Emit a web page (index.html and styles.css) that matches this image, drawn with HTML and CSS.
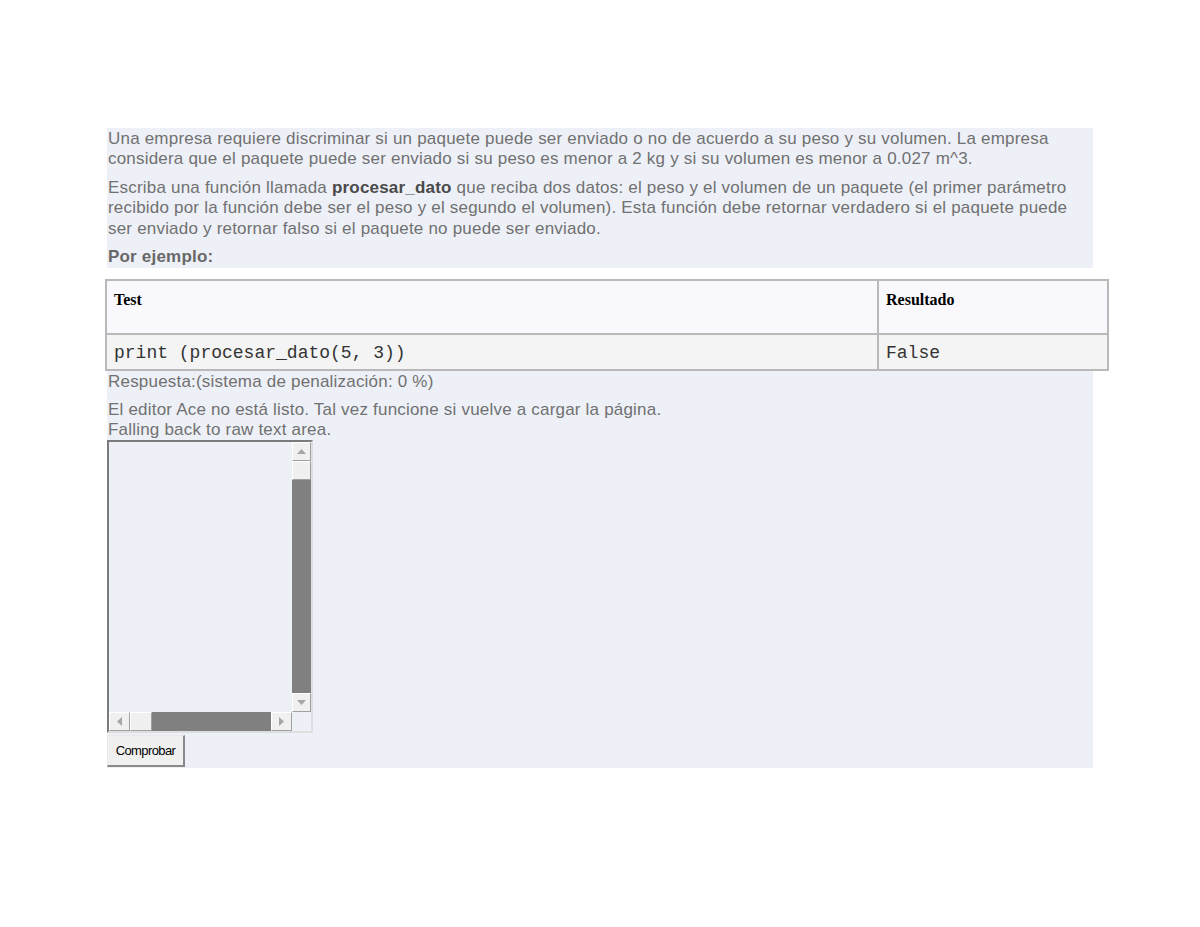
FILE: index.html
```html
<!DOCTYPE html>
<html lang="es">
<head>
<meta charset="utf-8">
<title>Pregunta</title>
<link rel="stylesheet" href="styles.css">
</head>
<body>
<div class="page">
  <div class="qtext">
    <p>Una empresa requiere discriminar si un paquete puede ser enviado o no de acuerdo a su peso y su volumen. La empresa considera que el paquete puede ser enviado si su peso es menor a 2 kg y si su volumen es menor a 0.027 m^3.</p>
    <p>Escriba una función llamada <b class="strong">procesar_dato</b> que reciba dos datos: el peso y el volumen de un paquete (el primer parámetro recibido por la función debe ser el peso y el segundo el volumen). Esta función debe retornar verdadero si el paquete puede ser enviado y retornar falso si el paquete no puede ser enviado.</p>
    <p class="ex">Por ejemplo:</p>
  </div>
  <table class="examples">
    <thead>
      <tr><th class="c1">Test</th><th class="c2">Resultado</th></tr>
    </thead>
    <tbody>
      <tr><td class="c1">print (procesar_dato(5, 3))</td><td class="c2">False</td></tr>
    </tbody>
  </table>
  <div class="answer">
    <div class="line">Respuesta:(sistema de penalización: 0 %)</div>
    <div class="notice">El editor Ace no está listo. Tal vez funcione si vuelve a cargar la página.<br>Falling back to raw text area.</div>
    <div class="ta">
      <div class="ta-body"></div>
      <div class="vbar">
        <div class="sbtn"><svg width="9" height="5" viewBox="0 0 9 5"><path d="M0 5 L4.5 0 L9 5 Z" fill="#a6a6a6"/></svg></div>
        <div class="vthumb"></div>
        <div class="vtrack"></div>
        <div class="sbtn"><svg width="9" height="5" viewBox="0 0 9 5"><path d="M0 0 L4.5 5 L9 0 Z" fill="#a6a6a6"/></svg></div>
      </div>
      <div class="hbar">
        <div class="sbtn hb"><svg width="5" height="9" viewBox="0 0 5 9"><path d="M5 0 L0 4.5 L5 9 Z" fill="#a6a6a6"/></svg></div>
        <div class="hthumb"></div>
        <div class="htrack"></div>
        <div class="sbtn hb"><svg width="5" height="9" viewBox="0 0 5 9"><path d="M0 0 L5 4.5 L0 9 Z" fill="#a6a6a6"/></svg></div>
      </div>
      <div class="corner"></div>
    </div>
    <div class="actions"><button class="check" type="button">Comprobar</button></div>
  </div>
</div>
</body>
</html>
```
FILE: styles.css
```css
html, body {
  margin: 0;
  padding: 0;
  background: #ffffff;
}
.page {
  margin: 128px 0 0 107px;
  width: 986px;
  font-family: "Liberation Sans", Arial, sans-serif;
  font-size: 17px;
  letter-spacing: 0.2px;
  color: #717171;
}
.qtext {
  background: #edf0f7;
  padding: 1px 0 0 1px;
  height: 139px;
}
.qtext p {
  margin: 0 0 8px 0;
  line-height: 20.4px;
}
.qtext p.ex {
  margin: 0;
  font-weight: bold;
  color: #686868;
}
.strong {
  color: #4a4a4a;
}
.examples {
  margin: 11px 0 0 -2px;
  width: 1004px;
  border-collapse: collapse;
  border: 2px solid #b3b3b3;
  letter-spacing: 0;
}
.examples th, .examples td {
  border: 2px solid #b9b9b9;
  text-align: left;
  vertical-align: top;
}
.examples th {
  background: #f8f8fd;
  font-family: "Liberation Serif", "Times New Roman", serif;
  font-weight: bold;
  font-size: 16px;
  color: #000000;
  height: 54px;
  box-sizing: border-box;
  padding: 10px 7px 0 7px;
}
.examples td {
  background: #f4f4f4;
  font-family: "Liberation Mono", "Courier New", monospace;
  font-size: 18px;
  color: #333333;
  height: 36px;
  box-sizing: border-box;
  padding: 8px 7px 0 7px;
}
.examples .c1 { width: 772px; }
.answer {
  background: #edf0f7;
  padding: 1px 0 1px 1px;
  height: 397px;
  box-sizing: border-box;
}
.line {
  line-height: 20px;
  margin-left: 0;
}
.notice {
  margin-top: 8px;
  line-height: 20px;
}
.ta {
  margin-left: -1px;
  width: 206px;
  height: 293px;
  box-sizing: border-box;
  border-top: 2px solid #7b7b7b;
  border-left: 2px solid #7b7b7b;
  border-right: 2px solid #dedede;
  border-bottom: 2px solid #dedede;
  display: grid;
  grid-template-columns: 1fr 19px;
  grid-template-rows: 1fr 19px;
  background: #edf0f7;
}
.ta-body { background: #edf0f7; }
.vbar {
  display: flex;
  flex-direction: column;
}
.hbar {
  display: flex;
}
.sbtn {
  flex: 0 0 19px;
  height: 19px;
  box-sizing: border-box;
  background: #f0f0f0;
  border-top: 1px solid #ffffff;
  border-left: 1px solid #ffffff;
  border-right: 1px solid #a0a0a0;
  border-bottom: 1px solid #a0a0a0;
  display: flex;
  align-items: center;
  justify-content: center;
}
.sbtn.hb {
  flex: 0 0 21px;
  height: 19px;
}
.vthumb {
  flex: 0 0 19px;
  box-sizing: border-box;
  background: #f0f0f0;
  border-top: 1px solid #ffffff;
  border-left: 1px solid #ffffff;
  border-right: 1px solid #a0a0a0;
  border-bottom: 1px solid #a0a0a0;
}
.vtrack, .htrack {
  flex: 1 1 auto;
  background: #808080;
}
.hthumb {
  flex: 0 0 22px;
  box-sizing: border-box;
  background: #f0f0f0;
  border-top: 1px solid #ffffff;
  border-left: 1px solid #ffffff;
  border-right: 1px solid #a0a0a0;
  border-bottom: 1px solid #a0a0a0;
}
.corner {
  background: #edf0f7;
}
.actions {
  margin-top: 2px;
  margin-left: -1px;
}
.check {
  width: 78px;
  height: 32px;
  padding: 0;
  background: #f0f0f0;
  border-top: 1px solid #e8e8e8;
  border-left: 1px solid #e8e8e8;
  border-right: 2px solid #8a8a8a;
  border-bottom: 2px solid #8a8a8a;
  font-family: "Liberation Sans", Arial, sans-serif;
  font-size: 13px;
  letter-spacing: -0.6px;
  color: #000000;
}
```
